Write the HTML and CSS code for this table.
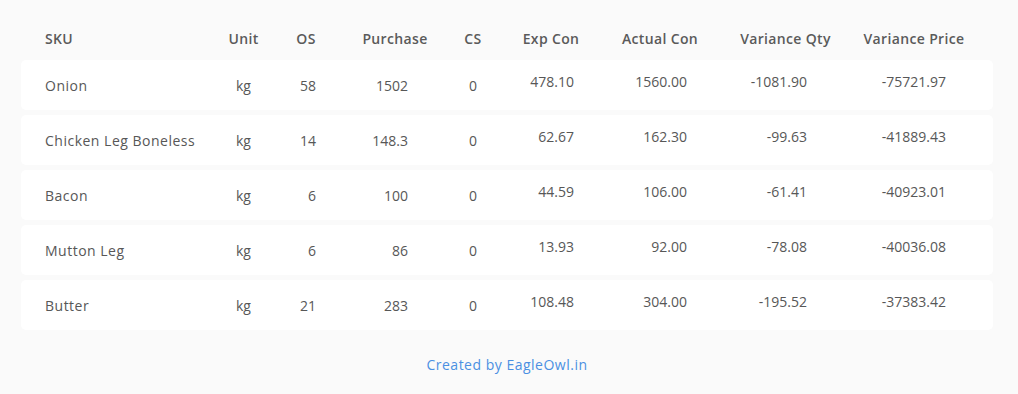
FILE: index.html
```html
<!DOCTYPE html>
<html>
<head>
<meta charset="utf-8">
<link rel="stylesheet" href="styles.css">
</head>
<body>
<div class="page">
  <div class="table">
    <div class="row head">
      <div class="c sku">SKU</div>
      <div class="c unit">Unit</div>
      <div class="c os">OS</div>
      <div class="c pur">Purchase</div>
      <div class="c cs">CS</div>
      <div class="c exp">Exp Con</div>
      <div class="c act">Actual Con</div>
      <div class="c vq">Variance Qty</div>
      <div class="c vp">Variance Price</div>
    </div>
    <div class="row item">
      <div class="c sku">Onion</div><div class="c unit">kg</div><div class="c os">58</div><div class="c pur">1502</div><div class="c cs">0</div>
      <div class="c exp up">478.10</div><div class="c act up">1560.00</div><div class="c vq up">-1081.90</div><div class="c vp up">-75721.97</div>
    </div>
    <div class="row item">
      <div class="c sku">Chicken Leg Boneless</div><div class="c unit">kg</div><div class="c os">14</div><div class="c pur">148.3</div><div class="c cs">0</div>
      <div class="c exp up">62.67</div><div class="c act up">162.30</div><div class="c vq up">-99.63</div><div class="c vp up">-41889.43</div>
    </div>
    <div class="row item">
      <div class="c sku">Bacon</div><div class="c unit">kg</div><div class="c os">6</div><div class="c pur">100</div><div class="c cs">0</div>
      <div class="c exp up">44.59</div><div class="c act up">106.00</div><div class="c vq up">-61.41</div><div class="c vp up">-40923.01</div>
    </div>
    <div class="row item">
      <div class="c sku">Mutton Leg</div><div class="c unit">kg</div><div class="c os">6</div><div class="c pur">86</div><div class="c cs">0</div>
      <div class="c exp up">13.93</div><div class="c act up">92.00</div><div class="c vq up">-78.08</div><div class="c vp up">-40036.08</div>
    </div>
    <div class="row item">
      <div class="c sku">Butter</div><div class="c unit">kg</div><div class="c os">21</div><div class="c pur">283</div><div class="c cs">0</div>
      <div class="c exp up">108.48</div><div class="c act up">304.00</div><div class="c vq up">-195.52</div><div class="c vp up">-37383.42</div>
    </div>
  </div>
  <div class="footer">Created by <span>EagleOwl.in</span></div>
</div>
</body>
</html>
```

FILE: styles.css
```css
html, body {
  margin: 0;
  padding: 0;
  background: #fafafa;
}
body {
  font-family: "Open Sans", "Noto Sans", sans-serif;
  color: #575757;
  font-size: 14px;
}
.page {
  padding: 22px 25px 0 21px;
  width: 972px;
}
.table {
  display: flex;
  flex-direction: column;
  gap: 5px;
}
.row {
  display: grid;
  grid-template-columns: 194px 57px 68px 110px 46px 110px 108px 143px 114px 1fr;
  align-items: center;
  height: 50px;
}
.head {
  height: 33px;
  font-weight: 600;
  color: #5a5a5a;
  letter-spacing: 0.35px;
}
.item {
  background: #fff;
  border-radius: 5px;
}
.c {
  white-space: nowrap;
}
.sku { padding-left: 24px; text-align: left; }
.item .sku { letter-spacing: 0.5px; }
.head .c:not(.sku) { text-align: center; padding: 0; }
.unit, .cs { text-align: center; }
.item .os { text-align: right; padding-right: 24px; }
.item .pur { text-align: right; padding-right: 42px; }
.item .exp { text-align: right; padding-right: 32px; }
.item .act { text-align: right; padding-right: 27px; }
.item .vq { text-align: right; padding-right: 50px; }
.item .vp { text-align: right; padding-right: 25px; }
.item .up { padding-bottom: 8px; }
.footer {
  text-align: center;
  color: #4a90e2;
  padding-top: 25px;
  font-size: 14px;
  letter-spacing: 0.5px;
}
```
